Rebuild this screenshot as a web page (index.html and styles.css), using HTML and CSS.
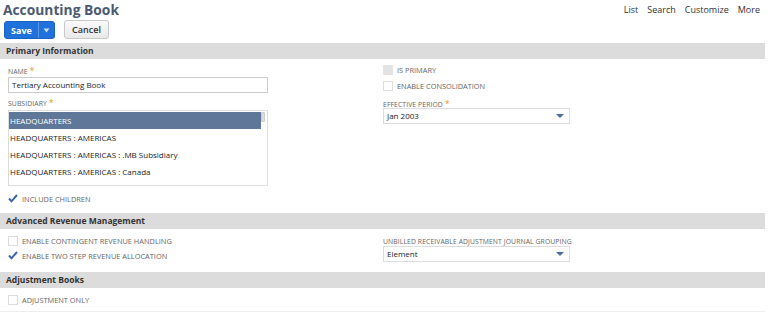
FILE: index.html
```html
<!DOCTYPE html>
<html>
<head>
<meta charset="utf-8">
<link rel="stylesheet" href="styles.css">
</head>
<body>
<div class="page">
  <div class="top">
    <h1 class="title">Accounting Book</h1>
    <nav class="nav"><span>List</span><span>Search</span><span>Customize</span><span>More</span></nav>
  </div>
  <div class="buttons">
    <div class="save"><span class="save-main">Save</span><span class="save-arrow"><svg width="7" height="5" viewBox="0 0 7 5"><path d="M0.5 0.5h6L3.5 4.5z" fill="#c9dcf5"/></svg></span></div>
    <div class="cancel">Cancel</div>
  </div>

  <div class="section">Primary Information</div>
  <div class="grid primary">
    <div class="col">
      <div class="label mt6">NAME <span class="req">*</span></div>
      <div class="input">Tertiary Accounting Book</div>
      <div class="label mt5">SUBSIDIARY <span class="req">*</span></div>
      <div class="listbox">
        <div class="opt sel">HEADQUARTERS</div>
        <div class="opt">HEADQUARTERS : AMERICAS</div>
        <div class="opt">HEADQUARTERS : AMERICAS : .MB Subsidiary</div>
        <div class="opt">HEADQUARTERS : AMERICAS : Canada</div>
        <div class="scroll"></div>
      </div>
      <div class="check mt5"><span class="box nob"><svg width="10" height="9" viewBox="0 0 10 9"><path d="M1 4.5l2.5 2.8L9 1" stroke="#3e64a8" stroke-width="2" fill="none"/></svg></span>INCLUDE CHILDREN</div>
    </div>
    <div class="col">
      <div class="check first"><span class="box grey"></span>IS PRIMARY</div>
      <div class="check"><span class="box"></span>ENABLE CONSOLIDATION</div>
      <div class="label mt4">EFFECTIVE PERIOD <span class="req">*</span></div>
      <div class="select sel1">Jan 2003<svg class="caret" width="8" height="4" viewBox="0 0 8 4"><path d="M0 0h8L4 4z" fill="#4b6b9b"/></svg></div>
    </div>
  </div>

  <div class="section s2">Advanced Revenue Management</div>
  <div class="grid arm">
    <div class="col">
      <div class="check"><span class="box"></span>ENABLE CONTINGENT REVENUE HANDLING</div>
      <div class="check"><span class="box nob"><svg width="10" height="9" viewBox="0 0 10 9"><path d="M1 4.5l2.5 2.8L9 1" stroke="#3e64a8" stroke-width="2" fill="none"/></svg></span>ENABLE TWO STEP REVENUE ALLOCATION</div>
    </div>
    <div class="col">
      <div class="label mt0">UNBILLED RECEIVABLE ADJUSTMENT JOURNAL GROUPING</div>
      <div class="select">Element<svg class="caret" width="8" height="4" viewBox="0 0 8 4"><path d="M0 0h8L4 4z" fill="#4b6b9b"/></svg></div>
    </div>
  </div>

  <div class="section s3">Adjustment Books</div>
  <div class="grid adj">
    <div class="col">
      <div class="check"><span class="box"></span>ADJUSTMENT ONLY</div>
    </div>
  </div>
  <div class="endline"></div>
</div>
</body>
</html>
```
FILE: styles.css
```css
* { box-sizing: border-box; }
html, body { margin: 0; padding: 0; background: #fff; }
body { font-family: "Open Sans", "Liberation Sans", sans-serif; color: #333; width: 768px; height: 313px; overflow: hidden; }
.page { padding: 0 3px 0 0; }
.top { display: flex; justify-content: space-between; align-items: flex-start; height: 20px; }
.title { margin: 0 0 0 3px; font-size: 13.8px; line-height: 19px; font-weight: 700; color: #4c5a72; }
.nav { display: flex; gap: 9px; font-size: 9px; color: #333; padding-top: 3px; padding-right: 5px; }
.buttons { display: flex; gap: 9px; margin-left: 4px; height: 19px; }
.save { display: flex; height: 18px; background: #1f71db; border-radius: 3px; border: 1px solid #1b63c2; color: #fff; font-weight: 700; font-size: 9px; margin-top: 1px; }
.save-main { width: 34px; display: flex; align-items: center; justify-content: center; border-right: 1px solid #5b95e6; }
.save-arrow { width: 15px; display: flex; align-items: center; justify-content: center; }
.cancel { width: 45px; height: 19px; border: 1px solid #c8c8c8; border-radius: 3px; background: linear-gradient(#fafafa, #e9e9e9); font-size: 9px; font-weight: 600; color: #333; display: flex; align-items: center; justify-content: center; }

.section { margin-top: 4px; height: 16px; background: #dcdcdc; font-size: 8.5px; font-weight: 700; color: #333; padding-left: 6px; line-height: 16px; width: 765px; }
.s2 { margin-top: 7px; }
.s3 { margin-top: 9px; }
.grid { display: grid; grid-template-columns: 375px 1fr; padding-left: 8px; }
.col { display: flex; flex-direction: column; }
.label { font-size: 6.8px; color: #666; letter-spacing: 0.1px; line-height: 9px; height: 9px; }
.req { color: #e39b22; font-size: 9px; }
.mt6 { margin-top: 7px; }
.mt5 { margin-top: 5px; }
.mt4 { margin-top: 5px; }
.mt0 { margin-top: 4px; }
.input { width: 260px; height: 16px; border: 1px solid #ccc; font-size: 8px; line-height: 14px; padding-left: 3px; color: #222; margin-top: 2px; }
.listbox { position: relative; width: 260px; height: 76px; border: 1px solid #ddd; margin-top: 3px; padding: 1px 6px 0 0; }
.opt { height: 17px; font-size: 8px; line-height: 17px; padding-left: 1px; color: #222; }
.opt.sel { background: #5f7799; color: #fff; }
.scroll { position: absolute; right: 2px; top: 1px; width: 4px; height: 10px; background: #ddd; border: 1px solid #ccc; border-radius: 1px; }
.check { display: flex; align-items: center; font-size: 7.4px; color: #666; height: 15px; }
.box { width: 10px; height: 10px; border: 1px solid #ddd; margin-right: 4px; display: inline-flex; align-items: center; justify-content: center; }
.box.grey { background: #e3e3e3; border-color: #e3e3e3; }
.box.nob { border: none; }
.first { margin-top: 3px; }
.primary .col:last-child .check { height: 16px; }
.select { position: relative; width: 187px; height: 16px; border: 1px solid #ddd; font-size: 8px; line-height: 14px; padding-left: 3px; color: #222; margin-top: 0; }
.caret { position: absolute; right: 5px; top: 5px; }
.arm { padding-top: 4px; }
.arm .check { height: 15px; }
.adj { padding-top: 4px; }
.endline { margin-top: 4px; height: 1px; background: #eee; width: 765px; }
```
